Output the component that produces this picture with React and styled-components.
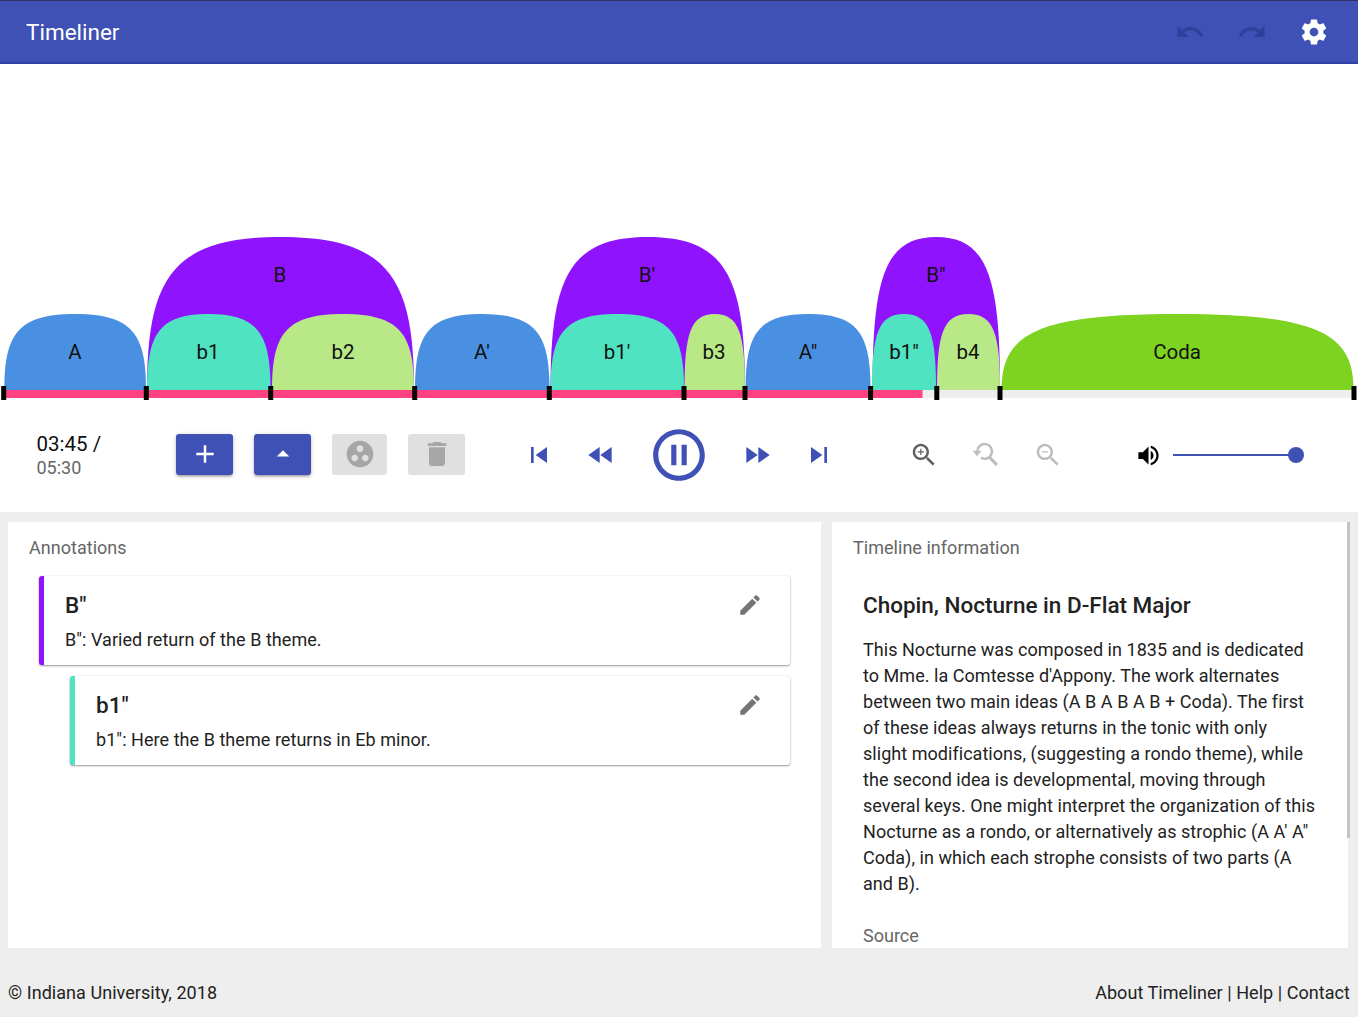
import React from 'react';
import styled, { createGlobalStyle } from 'styled-components';

const Global = createGlobalStyle`
  html, body { margin: 0; padding: 0; height: 100%; background: #eeeeee; }
  body { font-family: Roboto, "Noto Sans", sans-serif; overflow: hidden; }
  #root { height: 100%; }
  * { box-sizing: border-box; }
`;

const Page = styled.div`display:flex;flex-direction:column;height:1017px;width:1358px;`;
const AppBar = styled.header`
  height:64px;flex:none;display:flex;align-items:center;background:#3f51b5;
  border-top:1px solid #2b3163;border-bottom:2px solid #3041a4;padding-left:26px;padding-right:13px;
`;
const Title = styled.h1`margin:0;font-size:22.5px;font-weight:400;color:#fff;flex:1;`;
const BarIcon = styled.span`
  width:${p => p.$w}px;display:flex;justify-content:center;color:${p => p.$muted ? '#2e3f9c' : '#fff'};
`;
const Stage = styled.section`background:#fff;flex:none;height:448px;display:flex;flex-direction:column;`;
const Chart = styled.svg`display:block;flex:none;`;
const Controls = styled.div`flex:1;display:flex;align-items:center;padding:0 0 4px 36.5px;`;
const Time = styled.div`width:139.5px;flex:none;line-height:23px;margin-top:2px;`;
const Now = styled.div`font-size:20.5px;color:#111;`;
const Total = styled.div`font-size:18px;color:#666;`;
const Actions = styled.div`display:flex;gap:21px;width:332px;flex:none;margin-top:-2px;`;
const ActionButton = styled.button`
  width:${p => p.$w || 57}px;height:41px;border:0;border-radius:3px;padding:0;display:flex;align-items:center;justify-content:center;
  background:${p => p.disabled ? '#e0e0e0' : '#3f51b5'};color:${p => p.disabled ? '#a6a6a6' : '#fff'};
  box-shadow:${p => p.disabled ? 'none' : '0 1px 5px rgba(0,0,0,.2),0 2px 2px rgba(0,0,0,.14),0 3px 1px -2px rgba(0,0,0,.12)'};
`;
const Group = styled.div`display:flex;align-items:center;flex:none;margin-left:${p => p.$ml || 0}px;`;
const Slot = styled.span`
  width:${p => p.$w || 62}px;display:flex;justify-content:center;align-items:center;color:${p => p.$c || '#3f51b5'};
`;
const Track = styled.div`position:relative;width:123px;height:2px;margin-left:10px;background:#3f51b5;`;
const Thumb = styled.span`position:absolute;right:-8px;top:-7px;width:16px;height:16px;border-radius:50%;background:#3f51b5;`;
const Main = styled.main`flex:1;min-height:0;display:grid;grid-template-columns:813px 518px;gap:11px;padding:10px 8px 0;`;
const Panel = styled.section`position:relative;background:#fff;overflow:hidden;padding-top:15px;`;
const PanelTitle = styled.div`font-size:18px;line-height:21px;color:#666;padding-left:${p => p.$pl}px;letter-spacing:.03px;`;
const Card = styled.article`
  position:relative;margin-left:${p => p.$indent}px;width:${p => 782 - p.$indent}px;height:89px;margin-bottom:11px;
  background:#fff;border-left:5px solid ${p => p.$color};border-radius:3px;padding:16px 0 0 21px;
  box-shadow:0 1px 2px rgba(0,0,0,.4),0 0 2px rgba(0,0,0,.08);
`;
const Cards = styled.div`padding-top:18px;`;
const CardTitle = styled.h3`margin:0;font-size:22.5px;line-height:26px;font-weight:500;color:#222;`;
const CardText = styled.p`margin:10px 0 0;font-size:18px;line-height:24px;color:#222;letter-spacing:.05px;`;
const EditIcon = styled.span`position:absolute;right:27px;top:16px;color:#757575;display:flex;`;
const Info = styled.div`padding:32px 30px 0 31px;`;
const InfoTitle = styled.h2`margin:0 0 17px;font-size:22.5px;line-height:30px;font-weight:500;color:#222;`;
const InfoText = styled.p`margin:0;font-size:18px;line-height:26px;color:#222;letter-spacing:.04px;white-space:nowrap;`;
const Source = styled.div`margin-top:26px;font-size:18px;line-height:26px;color:#666;`;
const ScrollTrack = styled.div`position:absolute;right:0;top:0;bottom:0;width:2px;background:#eeeeee;`;
const ScrollThumb = styled.span`position:absolute;right:0;top:0;width:3px;height:316px;background:#c4c4c4;`;
const Footer = styled.footer`flex:none;height:69px;display:flex;justify-content:space-between;align-items:center;padding:25px 8px 6px;font-size:18px;color:#222;letter-spacing:.05px;`;

const P = ({ d, size = 24, extra }) => (
  <svg width={size} height={size} viewBox="0 0 24 24" fill="currentColor">
    <path d={d} />{extra && <path d={extra} />}
  </svg>
);

const icons = {
  undo: 'M12.5 8c-2.65 0-5.05.99-6.9 2.6L2 7v9h9l-3.62-3.62c1.39-1.16 3.16-1.88 5.12-1.88 3.54 0 6.55 2.31 7.68 5.5l2.37-.78C21.08 11.03 17.15 8 12.5 8z',
  redo: 'M18.4 10.6C16.55 8.99 14.15 8 11.5 8c-4.65 0-8.58 3.03-9.96 7.22L3.9 16c1.05-3.19 4.05-5.5 7.6-5.5 1.95 0 3.73.72 5.12 1.88L13 16h9V7l-3.6 3.6z',
  gear: 'M19.43 12.98c.04-.32.07-.64.07-.98s-.03-.66-.07-.98l2.11-1.65c.19-.15.24-.42.12-.64l-2-3.46c-.12-.22-.39-.3-.61-.22l-2.49 1c-.52-.4-1.08-.73-1.69-.98l-.38-2.65C14.46 2.18 14.25 2 14 2h-4c-.25 0-.46.18-.49.42l-.38 2.65c-.61.25-1.17.59-1.69.98l-2.49-1c-.23-.09-.49 0-.61.22l-2 3.46c-.13.22-.07.49.12.64l2.11 1.65c-.04.32-.07.65-.07.98s.03.66.07.98l-2.11 1.65c-.19.15-.24.42-.12.64l2 3.46c.12.22.39.3.61.22l2.49-1c.52.4 1.08.73 1.69.98l.38 2.65c.03.24.24.42.49.42h4c.25 0 .46-.18.49-.42l.38-2.65c.61-.25 1.17-.59 1.69-.98l2.49 1c.23.09.49 0 .61-.22l2-3.46c.12-.22.07-.49-.12-.64l-2.11-1.65zM12 15.5c-1.93 0-3.5-1.57-3.5-3.5s1.57-3.5 3.5-3.5 3.5 1.57 3.5 3.5-1.57 3.5-3.5 3.5z',
  add: 'M19 13h-6v6h-2v-6H5v-2h6V5h2v6h6v2z',
  up: 'M7 14l5-5 5 5z',
  group: 'M12 2C6.48 2 2 6.48 2 12s4.48 10 10 10 10-4.48 10-10S17.52 2 12 2zM8 17.5c-1.38 0-2.5-1.12-2.5-2.5s1.12-2.5 2.5-2.5 2.5 1.12 2.5 2.5-1.12 2.5-2.5 2.5zM9.5 8c0-1.38 1.12-2.5 2.5-2.5s2.5 1.12 2.5 2.5-1.12 2.5-2.5 2.5S9.5 9.38 9.5 8zm6.5 9.5c-1.38 0-2.5-1.12-2.5-2.5s1.12-2.5 2.5-2.5 2.5 1.12 2.5 2.5-1.12 2.5-2.5 2.5z',
  del: 'M6 19c0 1.1.9 2 2 2h8c1.1 0 2-.9 2-2V7H6v12zM19 4h-3.5l-1-1h-5l-1 1H5v2h14V4z',
  prev: 'M6 6h2v12H6zm3.5 6l8.5 6V6z',
  rew: 'M11 18V6l-8.5 6 8.5 6zm.5-6l8.5 6V6l-8.5 6z',
  pause: 'M9 16h2V8H9v8zm3-14C6.48 2 2 6.48 2 12s4.48 10 10 10 10-4.48 10-10S17.52 2 12 2zm0 18c-4.41 0-8-3.59-8-8s3.59-8 8-8 8 3.59 8 8-3.59 8-8 8zm1-4h2V8h-2v8z',
  ff: 'M4 18l8.5-6L4 6v12zm9-12v12l8.5-6L13 6z',
  next: 'M6 18l8.5-6L6 6v12zM16 6v12h2V6h-2z',
  lens: 'M15.5 14h-.79l-.28-.27C15.41 12.59 16 11.11 16 9.5 16 5.91 13.09 3 9.5 3S3 5.91 3 9.5 5.91 16 9.5 16c1.61 0 3.09-.59 4.23-1.57l.27.28v.79l5 4.99L20.49 19l-4.99-5zm-6 0C7.01 14 5 11.99 5 9.5S7.01 5 9.5 5 14 7.01 14 9.5 11.99 14 9.5 14z',
  plus: 'M12 10h-2v2H9v-2H7V9h2V7h1v2h2v1z',
  minus: 'M7 9h5v1H7z',
  vol: 'M3 9v6h4l5 5V4L7 9H3zm13.5 3c0-1.77-1.02-3.29-2.5-4.03v8.05c1.48-.73 2.5-2.25 2.5-4.02zM14 3.23v2.06c2.89.86 5 3.54 5 6.71s-2.11 5.85-5 6.71v2.06c4.01-.91 7-4.49 7-8.77 0-4.28-2.99-7.86-7-8.77z',
  edit: 'M3 17.25V21h3.75L17.81 9.94l-3.75-3.75L3 17.25zM20.71 7.04c.39-.39.39-1.02 0-1.41l-2.34-2.34c-.39-.39-1.02-.39-1.41 0l-1.83 1.83 3.75 3.75 1.83-1.83z',
};

const RestoreZoom = ({ size = 30 }) => (
  <svg width={size} height={size} viewBox="0 0 24 24" fill="none" stroke="currentColor" strokeWidth="2">
    <path d="M5 8.6A5.9 5.9 0 1 1 8 14.2" />
    <path d="M14.5 13.5l6.2 6.4" strokeWidth="2.4" />
    <path d="M1.4 8.6h7l-3.6 4.4z" fill="currentColor" stroke="none" />
  </svg>
);

const BLUE = '#4a90e2', TEAL = '#50e3c2', LIME = '#b8e986', PURPLE = '#9013fe', GREEN = '#7ed321';
const BASE = 390;
const arches = [
  { a: 147, b: 414, top: 237, c: PURPLE },
  { a: 550.5, b: 745, top: 237, c: PURPLE },
  { a: 872.5, b: 1000, top: 237, c: PURPLE },
  { a: 4.3, b: 146, top: 314, c: BLUE },
  { a: 147, b: 270.5, top: 314, c: TEAL },
  { a: 272, b: 414, top: 314, c: LIME },
  { a: 415, b: 549.5, top: 314, c: BLUE },
  { a: 550.5, b: 684, top: 314, c: TEAL },
  { a: 684.5, b: 745, top: 314, c: LIME },
  { a: 745.5, b: 870.5, top: 314, c: BLUE },
  { a: 872, b: 936, top: 314, c: TEAL },
  { a: 937, b: 1000, top: 314, c: LIME },
  { a: 1001.5, b: 1353.5, top: 314, c: GREEN },
];
const arch = ({ a, b, top }) => {
  const hw = (b - a) / 2, mid = a + hw, h = BASE - top;
  const cy = BASE - 0.72 * h, dx = 0.82 * hw;
  return `M${a} ${BASE}C${a} ${cy} ${mid - dx} ${top} ${mid} ${top}C${mid + dx} ${top} ${b} ${cy} ${b} ${BASE}Z`;
};
const labels = [
  ['A', 75, 352], ['b1', 208, 352], ['b2', 343, 352], ["A'", 482, 352], ["b1'", 617, 352], ['b3', 714, 352],
  ['A"', 808, 352], ['b1"', 904, 352], ['b4', 968, 352], ['Coda', 1177, 352],
  ['B', 280, 275], ["B'", 647, 275], ['B"', 936, 275],
];
const ticks = [3.7, 146.3, 270.7, 414.7, 549.3, 684, 745, 870.6, 936.8, 1000, 1354];

const Timeline = () => (
  <Chart width="1358" height="338" viewBox="0 64 1358 338">
    {arches.map(x => <path key={x.a} d={arch(x)} fill={x.c} />)}
    <rect x="4" y="390" width="1350" height="8" fill="#eeeeee" />
    <rect x="4" y="390" width="918.5" height="8" fill="#ff4081" />
    {ticks.map(t => <rect key={t} x={t - 2.5} y="386" width="5" height="14" fill="#000" />)}
    {labels.map(([t, x, y]) => (
      <text key={t} x={x} y={y} dy="7" textAnchor="middle" fontFamily="Roboto, sans-serif" fontSize="20.5" fill="#111">{t}</text>
    ))}
  </Chart>
);

const infoLines = [
  'This Nocturne was composed in 1835 and is dedicated',
  "to Mme. la Comtesse d'Appony. The work alternates",
  'between two main ideas (A B A B A B + Coda). The first',
  'of these ideas always returns in the tonic with only',
  'slight modifications, (suggesting a rondo theme), while',
  'the second idea is developmental, moving through',
  'several keys. One might interpret the organization of this',
  "Nocturne as a rondo, or alternatively as strophic (A A' A\"",
  'Coda), in which each strophe consists of two parts (A',
  'and B).',
];

export default function App() {
  return (
    <Page>
      <Global />
      <AppBar>
        <Title>Timeliner</Title>
        <BarIcon $w={62} $muted><P d={icons.undo} size={30} /></BarIcon>
        <BarIcon $w={62} $muted><P d={icons.redo} size={30} /></BarIcon>
        <BarIcon $w={62}><P d={icons.gear} size={30} /></BarIcon>
      </AppBar>
      <Stage>
        <Timeline />
        <Controls>
          <Time>
            <Now>03:45 /</Now>
            <Total>05:30</Total>
          </Time>
          <Actions>
            <ActionButton><P d={icons.add} size={30} /></ActionButton>
            <ActionButton><P d={icons.up} size={30} /></ActionButton>
            <ActionButton disabled $w={55}><P d={icons.group} size={32} /></ActionButton>
            <ActionButton disabled><P d={icons.del} size={32} /></ActionButton>
          </Actions>
          <Group>
            <Slot><P d={icons.prev} size={32} /></Slot>
            <Slot><P d={icons.rew} size={32} /></Slot>
            <Slot $w={94}><P d={icons.pause} size={62} /></Slot>
            <Slot><P d={icons.ff} size={32} /></Slot>
            <Slot><P d={icons.next} size={32} /></Slot>
          </Group>
          <Group $ml={43}>
            <Slot $c="#616161"><P d={icons.lens} extra={icons.plus} size={30} /></Slot>
            <Slot $c="#bdbdbd"><RestoreZoom /></Slot>
            <Slot $c="#bdbdbd"><P d={icons.lens} extra={icons.minus} size={30} /></Slot>
          </Group>
          <Group $ml={54}>
            <Slot $w={30} $c="#000"><P d={icons.vol} size={27} /></Slot>
            <Track><Thumb /></Track>
          </Group>
        </Controls>
      </Stage>
      <Main>
        <Panel>
          <PanelTitle $pl={21}>Annotations</PanelTitle>
          <Cards>
            <Card $indent={31} $color={PURPLE}>
              <CardTitle>B"</CardTitle>
              <CardText>B": Varied return of the B theme.</CardText>
              <EditIcon><P d={icons.edit} size={26} /></EditIcon>
            </Card>
            <Card $indent={62} $color={TEAL}>
              <CardTitle>b1"</CardTitle>
              <CardText>b1": Here the B theme returns in Eb minor.</CardText>
              <EditIcon><P d={icons.edit} size={26} /></EditIcon>
            </Card>
          </Cards>
        </Panel>
        <Panel>
          <PanelTitle $pl={21}>Timeline information</PanelTitle>
          <Info>
            <InfoTitle>Chopin, Nocturne in D-Flat Major</InfoTitle>
            <InfoText>
              {infoLines.map(l => <React.Fragment key={l}>{l}<br /></React.Fragment>)}
            </InfoText>
            <Source>Source</Source>
          </Info>
          <ScrollTrack />
          <ScrollThumb />
        </Panel>
      </Main>
      <Footer>
        <span>© Indiana University, 2018</span>
        <span>About Timeliner | Help | Contact</span>
      </Footer>
    </Page>
  );
}
